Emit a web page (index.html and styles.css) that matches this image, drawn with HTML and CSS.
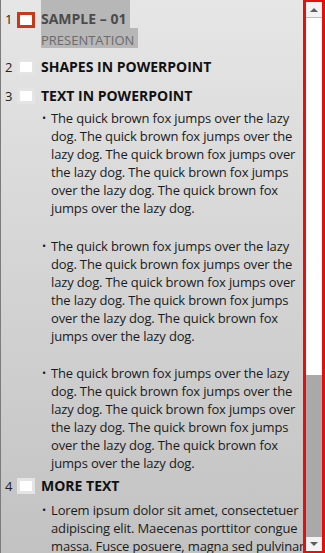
FILE: index.html
```html
<!DOCTYPE html>
<html>
<head>
<meta charset="utf-8">
<link rel="stylesheet" href="styles.css">
</head>
<body>
<div class="pane">
  <div class="outline">
    <div class="slide first">
      <div class="head">
        <span class="num">1</span>
        <span class="thumb active"></span>
        <div class="titles">
          <span class="title sel">SAMPLE – 01</span>
          <span class="sub sel">PRESENTATION</span>
        </div>
      </div>
    </div>
    <div class="slide">
      <div class="head">
        <span class="num">2</span>
        <span class="thumb"></span>
        <span class="title">SHAPES IN POWERPOINT</span>
      </div>
    </div>
    <div class="slide">
      <div class="head">
        <span class="num">3</span>
        <span class="thumb"></span>
        <span class="title">TEXT IN POWERPOINT</span>
      </div>
      <ul class="bullets">
        <li>The quick brown fox jumps over the lazy dog. The quick brown fox jumps over the lazy dog. The quick brown fox jumps over the lazy dog. The quick brown fox jumps over the lazy dog. The quick brown fox jumps over the lazy dog.</li>
        <li>The quick brown fox jumps over the lazy dog. The quick brown fox jumps over the lazy dog. The quick brown fox jumps over the lazy dog. The quick brown fox jumps over the lazy dog. The quick brown fox jumps over the lazy dog.</li>
        <li>The quick brown fox jumps over the lazy dog. The quick brown fox jumps over the lazy dog. The quick brown fox jumps over the lazy dog. The quick brown fox jumps over the lazy dog. The quick brown fox jumps over the lazy dog.</li>
      </ul>
    </div>
    <div class="slide">
      <div class="head">
        <span class="num">4</span>
        <span class="thumb"></span>
        <span class="title">MORE TEXT</span>
      </div>
      <ul class="bullets tight">
        <li>Lorem ipsum dolor sit amet, consectetuer adipiscing elit. Maecenas porttitor congue massa. Fusce posuere, magna sed pulvinar ultricies, purus lectus malesuada libero, sit amet commodo magna eros quis urna.</li>
      </ul>
    </div>
  </div>
  <div class="scrollbar">
    <div class="sb-btn up"><span class="arrow-up"></span></div>
    <div class="sb-track"><div class="sb-thumb"></div></div>
    <div class="sb-btn down"><span class="arrow-down"></span></div>
  </div>
</div>
</body>
</html>
```
FILE: styles.css
```css
html, body {
  margin: 0;
  padding: 0;
}
body {
  font-family: "Open Sans", "Noto Sans", sans-serif;
  color: #1b1b1b;
  width: 325px;
  height: 553px;
  overflow: hidden;
}
.pane {
  display: flex;
  height: 553px;
}
.outline {
  flex: 1;
  overflow: hidden;
  border-left: 1px solid #7c7c7c;
  background: linear-gradient(#e6e6e6, #c2c2c2);
}
.slide {
  margin-top: 9px;
}
.slide.first {
  margin-top: 0;
}
.head {
  display: flex;
  align-items: center;
  height: 20px;
  padding-left: 4px;
}
.slide.first .head {
  align-items: flex-start;
  height: auto;
}
.num {
  width: 12px;
  font-size: 13px;
  line-height: 20px;
  color: #222;
}
.slide.first .num {
  margin-top: 9px;
}
.thumb {
  width: 12px;
  height: 10px;
  background: #fff;
  border: 3px solid #e4e4e4;
  margin-right: 6px;
}
.slide.first .thumb {
  margin-top: 12px;
}
.thumb.active {
  border-color: #c8391a;
}
.title {
  font-weight: bold;
  font-size: 14px;
  line-height: 20px;
  color: #111;
}
.titles {
  display: flex;
  flex-direction: column;
  align-items: flex-start;
}
.sel {
  background: #b7b7b7;
  padding-right: 4px;
}
.titles .title {
  color: #4b4b4b;
  padding-top: 9px;
  line-height: 19px;
}
.titles .sub {
  font-size: 13px;
  line-height: 15px;
  padding-top: 5px;
  color: #6b6b6b;
}
.bullets {
  margin: 3px 0 -5px 0;
  padding: 0 0 0 50px;
  list-style: none;
  font-size: 13px;
  line-height: 18px;
  letter-spacing: -0.15px;
  width: 254px;
}
.bullets li {
  position: relative;
  margin-bottom: 19.5px;
}
.bullets li:last-child {
  margin-bottom: 0;
}
.bullets li::before {
  content: "•";
  position: absolute;
  left: -9px;
  font-size: 11px;
}
.bullets.tight {
  margin-top: 5px;
}
.scrollbar {
  width: 22px;
  box-sizing: border-box;
  border: 3px solid #e4100e;
  border-top-width: 2px;
  border-bottom-width: 2px;
  background: #fff;
  display: flex;
  flex-direction: column;
}
.sb-btn {
  display: flex;
  align-items: center;
  justify-content: center;
  background: #f3f3f3;
}
.sb-btn.up {
  height: 15px;
  border-bottom: 1px solid #bcbcbc;
}
.sb-btn.down {
  height: 14px;
}
.sb-track {
  flex: 1;
  display: flex;
  flex-direction: column;
  justify-content: flex-end;
}
.sb-thumb {
  height: 162px;
  background: #a9a9a9;
}
.arrow-up {
  width: 0;
  height: 0;
  border-left: 4px solid transparent;
  border-right: 4px solid transparent;
  border-bottom: 4px solid #5f5f5f;
}
.arrow-down {
  width: 0;
  height: 0;
  border-left: 4px solid transparent;
  border-right: 4px solid transparent;
  border-top: 4px solid #5f5f5f;
}
```
